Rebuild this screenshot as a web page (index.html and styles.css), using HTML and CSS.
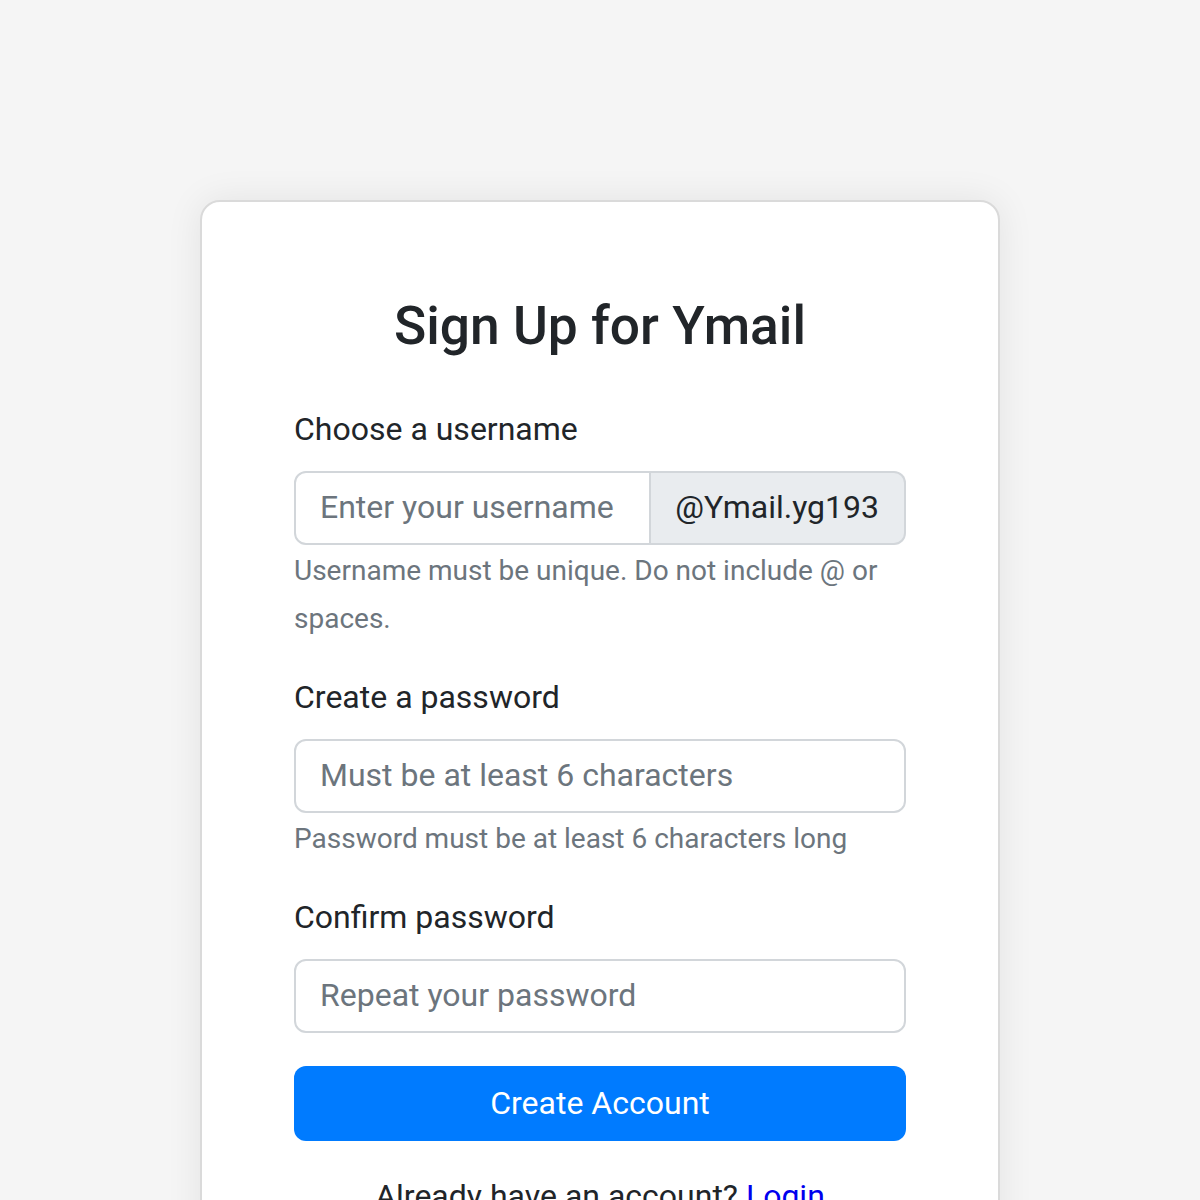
FILE: index.html
```html
<!DOCTYPE html>
<html lang="en">
<head>
<meta charset="utf-8">
<title>Sign Up for Ymail</title>
<link rel="stylesheet" href="styles.css">
</head>
<body>
<main class="page">
  <section class="card">
    <h1 class="title">Sign Up for Ymail</h1>
    <form class="form">
      <div class="field">
        <label class="label" for="username">Choose a username</label>
        <div class="input-group">
          <input class="input input-joined" id="username" type="text" placeholder="Enter your username">
          <span class="addon">@Ymail.yg193</span>
        </div>
        <p class="help">Username must be unique. Do not include @ or spaces.</p>
      </div>
      <div class="field">
        <label class="label" for="password">Create a password</label>
        <input class="input" id="password" type="password" placeholder="Must be at least 6 characters">
        <p class="help">Password must be at least 6 characters long</p>
      </div>
      <div class="field field-last">
        <label class="label" for="confirm">Confirm password</label>
        <input class="input" id="confirm" type="password" placeholder="Repeat your password">
      </div>
      <button class="btn" type="button">Create Account</button>
    </form>
    <p class="footer">Already have an account? <a href="#" class="link">Login</a></p>
  </section>
</main>
</body>
</html>
```
FILE: styles.css
```css
html, body {
  margin: 0;
  padding: 0;
}
body {
  background: #f5f5f5;
  font-family: Roboto, "Liberation Sans", Arial, sans-serif;
  color: #212529;
}
.page {
  display: flex;
  justify-content: center;
  padding-top: 200px;
}
.card {
  width: 800px;
  box-sizing: border-box;
  background: #fff;
  border: 2px solid #dadada;
  border-radius: 20px;
  box-shadow: 0 0 36px rgba(0, 0, 0, 0.08);
  padding: 91px 92px 80px;
}
.title {
  margin: 0 0 45px;
  text-align: center;
  font-size: 53.3px;
  line-height: 67px;
  font-weight: 500;
  color: #212529;
}
.form {
  display: flex;
  flex-direction: column;
}
.field {
  display: flex;
  flex-direction: column;
  margin-bottom: 30px;
}
.field-last {
  margin-bottom: 33px;
}
.label {
  font-size: 32px;
  line-height: 48px;
  margin-bottom: 18px;
  color: #212529;
}
.input-group {
  display: flex;
}
.input {
  box-sizing: border-box;
  width: 100%;
  height: 74px;
  margin: 0;
  padding: 10px 24px 12px;
  font-family: inherit;
  font-size: 32px;
  line-height: 48px;
  color: #212529;
  background: #fff;
  border: 2px solid #d2d6da;
  border-radius: 12px;
  outline: none;
}
.input::placeholder {
  color: #6c757d;
  opacity: 1;
}
.input-joined {
  flex: 1;
  min-width: 0;
  border-radius: 12px 0 0 12px;
}
.addon {
  box-sizing: border-box;
  height: 74px;
  display: flex;
  align-items: center;
  padding: 0 25px 2px 24px;
  font-size: 32px;
  line-height: 48px;
  color: #212529;
  background: #e9ecef;
  border: 2px solid #d2d6da;
  border-left: 0;
  border-radius: 0 12px 12px 0;
  white-space: nowrap;
}
.help {
  margin: 2px 0 0;
  font-size: 28px;
  line-height: 48px;
  color: #6c757d;
}
.btn {
  height: 75px;
  margin: 0;
  padding: 0 0 2px;
  border: 0;
  border-radius: 12px;
  background: #007bff;
  color: #fff;
  font-family: inherit;
  font-size: 32px;
  line-height: 48px;
}
.footer {
  margin: 31px 0 0;
  text-align: center;
  font-size: 32px;
  line-height: 48px;
  color: #212529;
}
.link {
  color: #0000ee;
}
```
